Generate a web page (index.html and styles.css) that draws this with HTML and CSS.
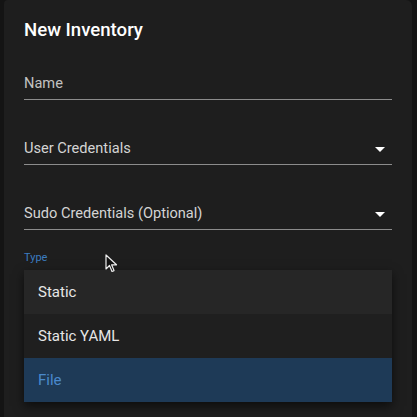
FILE: index.html
```html
<!DOCTYPE html>
<html lang="en">
<head>
<meta charset="UTF-8">
<title>New Inventory</title>
<link rel="stylesheet" href="styles.css">
</head>
<body>

<div class="dialog">
  <h2 class="title">New Inventory</h2>

  <!-- fields -->
  <div class="field">
    <span class="label">Name</span>
  </div>
  <div class="field select">
    <span class="label">User Credentials</span>
    <span class="arrow"></span>
  </div>
  <div class="field select">
    <span class="label">Sudo Credentials (Optional)</span>
    <span class="arrow"></span>
  </div>

  <!-- type menu -->
  <div class="type">
    <span class="type-label">Type</span>
    <svg class="cursor" width="14" height="20" viewBox="0 0 14 20">
      <path d="M1 1 L1 15 L4.5 11.5 L7 17.5 L9 16.6 L6.6 10.8 L11.5 10.8 Z" fill="#111" stroke="#eee" stroke-width="1.2" stroke-linejoin="round"/>
    </svg>
    <ul class="menu">
      <li class="hover">Static</li>
      <li>Static YAML</li>
      <li class="active">File</li>
    </ul>
  </div>
</div>

</body>
</html>
```

FILE: styles.css
```css
*{box-sizing:border-box}
body{
  margin:0;height:417px;overflow:hidden;
  background:#141414;
  font-family:Roboto,'Noto Sans',sans-serif;color:#fff}
.dialog{
  margin-left:4px;width:408px;height:417px;
  background:#1e1e1e;border-radius:4px 6px 0 0;
  padding:18px 20px 0 20px}
.title{margin:0 0 26px;font-size:18.6px;font-weight:500;line-height:24px}
.field{
  position:relative;height:32px;margin-bottom:33px;
  border-bottom:1px solid #8c8c8c;
  display:flex;align-items:flex-end;padding-bottom:7px}
.field .label{font-size:14.6px;color:#c2c2c2}
.select .label{color:#d4d4d4}
.arrow{
  position:absolute;right:7px;bottom:12px;
  border-left:5px solid transparent;border-right:5px solid transparent;
  border-top:5px solid #fff}
.type{position:relative;margin-top:-14px}
.type-label{display:block;font-size:11px;color:#3b7cc0;height:21px;line-height:17px}
.cursor{position:absolute;left:81px;top:5px}
.menu{
  list-style:none;margin:0;padding:0;
  background:#1f1f1f;
  box-shadow:0 4px 10px rgba(0,0,0,.6)}
.menu li{height:44px;line-height:44px;padding-left:14px;font-size:15px;color:#e6e6e6}
.menu li.hover{background:#262626}
.menu li.active{background:#1e3a57;color:#4a89cc}
```
